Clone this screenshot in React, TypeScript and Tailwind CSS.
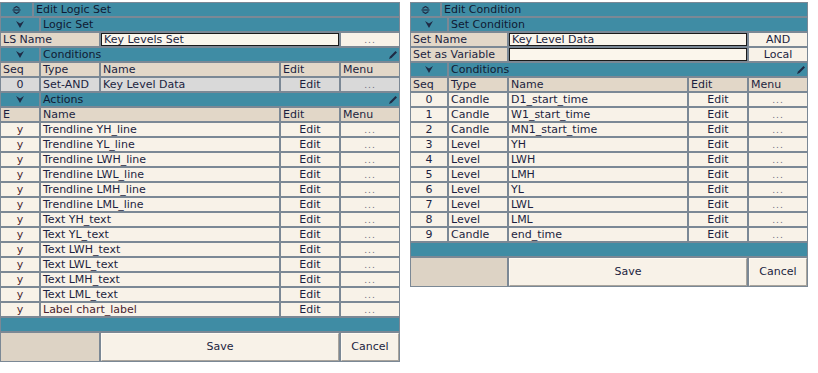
import React from 'react';

const font = { fontFamily: '"DejaVu Sans", Verdana, sans-serif' };

function Collapse() {
  return (
    <svg width="9" height="8" viewBox="0 0 9 8" className="text-[#1f2a44]">
      <path d="M1.5 2.5 L4.5 0.5 L7.5 2.5" fill="none" stroke="currentColor" strokeWidth="1.2" />
      <path d="M0.5 4 H8.5" stroke="currentColor" strokeWidth="1.2" />
      <path d="M1.5 5.5 L4.5 7.5 L7.5 5.5" fill="none" stroke="currentColor" strokeWidth="1.2" />
    </svg>
  );
}

function Chevron() {
  return (
    <svg width="8" height="7" viewBox="0 0 8 7">
      <polygon points="0,0 4,2.5 8,0 4,7" fill="#1f2a44" />
    </svg>
  );
}

function Pencil() {
  return (
    <svg width="10" height="10" viewBox="0 0 10 10">
      <path d="M1 9 L2 6.5 L7.5 1 L9 2.5 L3.5 8 Z" fill="#1f2a44" />
    </svg>
  );
}

function TealRow({ icon, iconW, title, pencil }: { icon?: 'collapse' | 'chevron'; iconW?: string; title?: string; pencil?: boolean }) {
  return (
    <div className="flex h-[13px] gap-[2px]">
      {icon && (
        <div className={`${iconW} flex items-center justify-center bg-[#3f8ca4]`}>
          {icon === 'collapse' ? <Collapse /> : <Chevron />}
        </div>
      )}
      <div className="flex flex-1 items-center justify-between bg-[#3f8ca4] pl-[2px] pr-[1px] text-[#0f1a33]">
        <span className="pt-[1px]">{title}</span>
        {pencil && <Pencil />}
      </div>
    </div>
  );
}

function Cell({ w, bg = 'bg-[#f8f2e8]', center, children, color }: { w?: string; bg?: string; center?: boolean; children?: React.ReactNode; color?: string }) {
  return (
    <div className={`${w ?? 'flex-1'} ${bg} ${center ? 'text-center' : 'pl-[2px]'} ${color ?? 'text-[#1c1f3f]'} overflow-hidden whitespace-nowrap pt-[1px]`}>
      {children}
    </div>
  );
}

function Dots() {
  return <span className="text-[9px] tracking-[1px] text-[#6b6b7b]">...</span>;
}

const actions = [
  'Trendline YH_line',
  'Trendline YL_line',
  'Trendline LWH_line',
  'Trendline LWL_line',
  'Trendline LMH_line',
  'Trendline LML_line',
  'Text YH_text',
  'Text YL_text',
  'Text LWH_text',
  'Text LWL_text',
  'Text LMH_text',
  'Text LML_text',
  'Label chart_label',
];

const conditions = [
  ['Candle', 'D1_start_time'],
  ['Candle', 'W1_start_time'],
  ['Candle', 'MN1_start_time'],
  ['Level', 'YH'],
  ['Level', 'LWH'],
  ['Level', 'LMH'],
  ['Level', 'YL'],
  ['Level', 'LWL'],
  ['Level', 'LML'],
  ['Candle', 'end_time'],
];

const hdr = 'bg-[#e2d7c8]';

function Buttons({ labelW, saveW }: { labelW: string; saveW: string }) {
  return (
    <div className="flex h-[28px] gap-[2px]">
      <div className={`${labelW} bg-[#ddd3c5]`} />
      <div className={`${saveW} flex items-center justify-center border border-t-[#fffaf2] border-l-[#fffaf2] border-b-[#a9a49c] border-r-[#a9a49c] bg-[#f8f2e8] text-[#1c1f3f]`}>
        Save
      </div>
      <div className="flex flex-1 items-center justify-center border border-t-[#fffaf2] border-l-[#fffaf2] border-b-[#a9a49c] border-r-[#a9a49c] bg-[#f8f2e8] text-[#1c1f3f]">
        Cancel
      </div>
    </div>
  );
}

function LogicSetPanel() {
  return (
    <div className="flex w-[400px] flex-col gap-[2px] bg-[#7b8895] p-[1px]">
      <TealRow icon="collapse" iconW="w-[31px]" title="Edit Logic Set" />
      <TealRow icon="chevron" iconW="w-[38px]" title="Logic Set" />
      <div className="flex h-[13px] gap-[2px]">
        <Cell w="w-[98px]" bg={hdr}>LS Name</Cell>
        <div className="w-[238px] border border-[#1a1a1a] bg-[#fbf6ec] pl-[2px] leading-[12px] text-[#1c1f3f]">Key Levels Set</div>
        <Cell center><Dots /></Cell>
      </div>
      <TealRow icon="chevron" iconW="w-[38px]" title="Conditions" pencil />
      <div className="flex h-[13px] gap-[2px]">
        <Cell w="w-[38px]" bg={hdr}>Seq</Cell>
        <Cell w="w-[58px]" bg={hdr}>Type</Cell>
        <Cell w="w-[178px]" bg={hdr}>Name</Cell>
        <Cell w="w-[58px]" bg={hdr}>Edit</Cell>
        <Cell bg={hdr}>Menu</Cell>
      </div>
      <div className="flex h-[13px] gap-[2px]">
        <Cell w="w-[38px]" bg="bg-[#d9d9d9]" center>0</Cell>
        <Cell w="w-[58px]" bg="bg-[#d9d9d9]">Set-AND</Cell>
        <Cell w="w-[178px]" bg="bg-[#d9d9d9]">Key Level Data</Cell>
        <Cell w="w-[58px]" bg="bg-[#d9d9d9]" center>Edit</Cell>
        <Cell bg="bg-[#d9d9d9]" center><Dots /></Cell>
      </div>
      <TealRow icon="chevron" iconW="w-[38px]" title="Actions" pencil />
      <div className="flex h-[13px] gap-[2px]">
        <Cell w="w-[38px]" bg={hdr}>E</Cell>
        <Cell w="w-[238px]" bg={hdr}>Name</Cell>
        <Cell w="w-[58px]" bg={hdr}>Edit</Cell>
        <Cell bg={hdr}>Menu</Cell>
      </div>
      {actions.map((a, i) => (
        <div key={a} className="flex h-[13px] gap-[2px]">
          <Cell w="w-[38px]" center color="text-[#4a1f2f]">y</Cell>
          <Cell w="w-[238px]" color={i === actions.length - 1 ? 'text-[#4a1f2f]' : undefined}>{a}</Cell>
          <Cell w="w-[58px]" center>Edit</Cell>
          <Cell center><Dots /></Cell>
        </div>
      ))}
      <TealRow />
      <Buttons labelW="w-[98px]" saveW="w-[238px]" />
    </div>
  );
}

function ConditionPanel() {
  return (
    <div className="flex w-[398px] flex-col gap-[2px] bg-[#7b8895] p-[1px]">
      <TealRow icon="collapse" iconW="w-[29px]" title="Edit Condition" />
      <TealRow icon="chevron" iconW="w-[36px]" title="Set Condition" />
      <div className="flex h-[13px] gap-[2px]">
        <Cell w="w-[96px]" bg={hdr}>Set Name</Cell>
        <div className="w-[238px] border border-[#1a1a1a] bg-[#fbf6ec] pl-[2px] leading-[12px] text-[#1c1f3f]">Key Level Data</div>
        <Cell center>AND</Cell>
      </div>
      <div className="flex h-[13px] gap-[2px]">
        <Cell w="w-[96px]" bg={hdr}>Set as Variable</Cell>
        <div className="w-[238px] border border-[#1a1a1a] bg-[#fbf6ec]" />
        <Cell center>Local</Cell>
      </div>
      <TealRow icon="chevron" iconW="w-[36px]" title="Conditions" pencil />
      <div className="flex h-[13px] gap-[2px]">
        <Cell w="w-[36px]" bg={hdr}>Seq</Cell>
        <Cell w="w-[58px]" bg={hdr}>Type</Cell>
        <Cell w="w-[178px]" bg={hdr}>Name</Cell>
        <Cell w="w-[58px]" bg={hdr}>Edit</Cell>
        <Cell bg={hdr}>Menu</Cell>
      </div>
      {conditions.map(([type, name], i) => (
        <div key={name} className="flex h-[13px] gap-[2px]">
          <Cell w="w-[36px]" center>{i}</Cell>
          <Cell w="w-[58px]">{type}</Cell>
          <Cell w="w-[178px]">{name}</Cell>
          <Cell w="w-[58px]" center>Edit</Cell>
          <Cell center><Dots /></Cell>
        </div>
      ))}
      <TealRow />
      <Buttons labelW="w-[96px]" saveW="w-[238px]" />
    </div>
  );
}

export default function App() {
  return (
    <div className="flex h-[373px] w-[818px] items-start gap-[10px] bg-white pt-[2px] text-[11px] leading-[12px]" style={font}>
      <LogicSetPanel />
      <ConditionPanel />
    </div>
  );
}
